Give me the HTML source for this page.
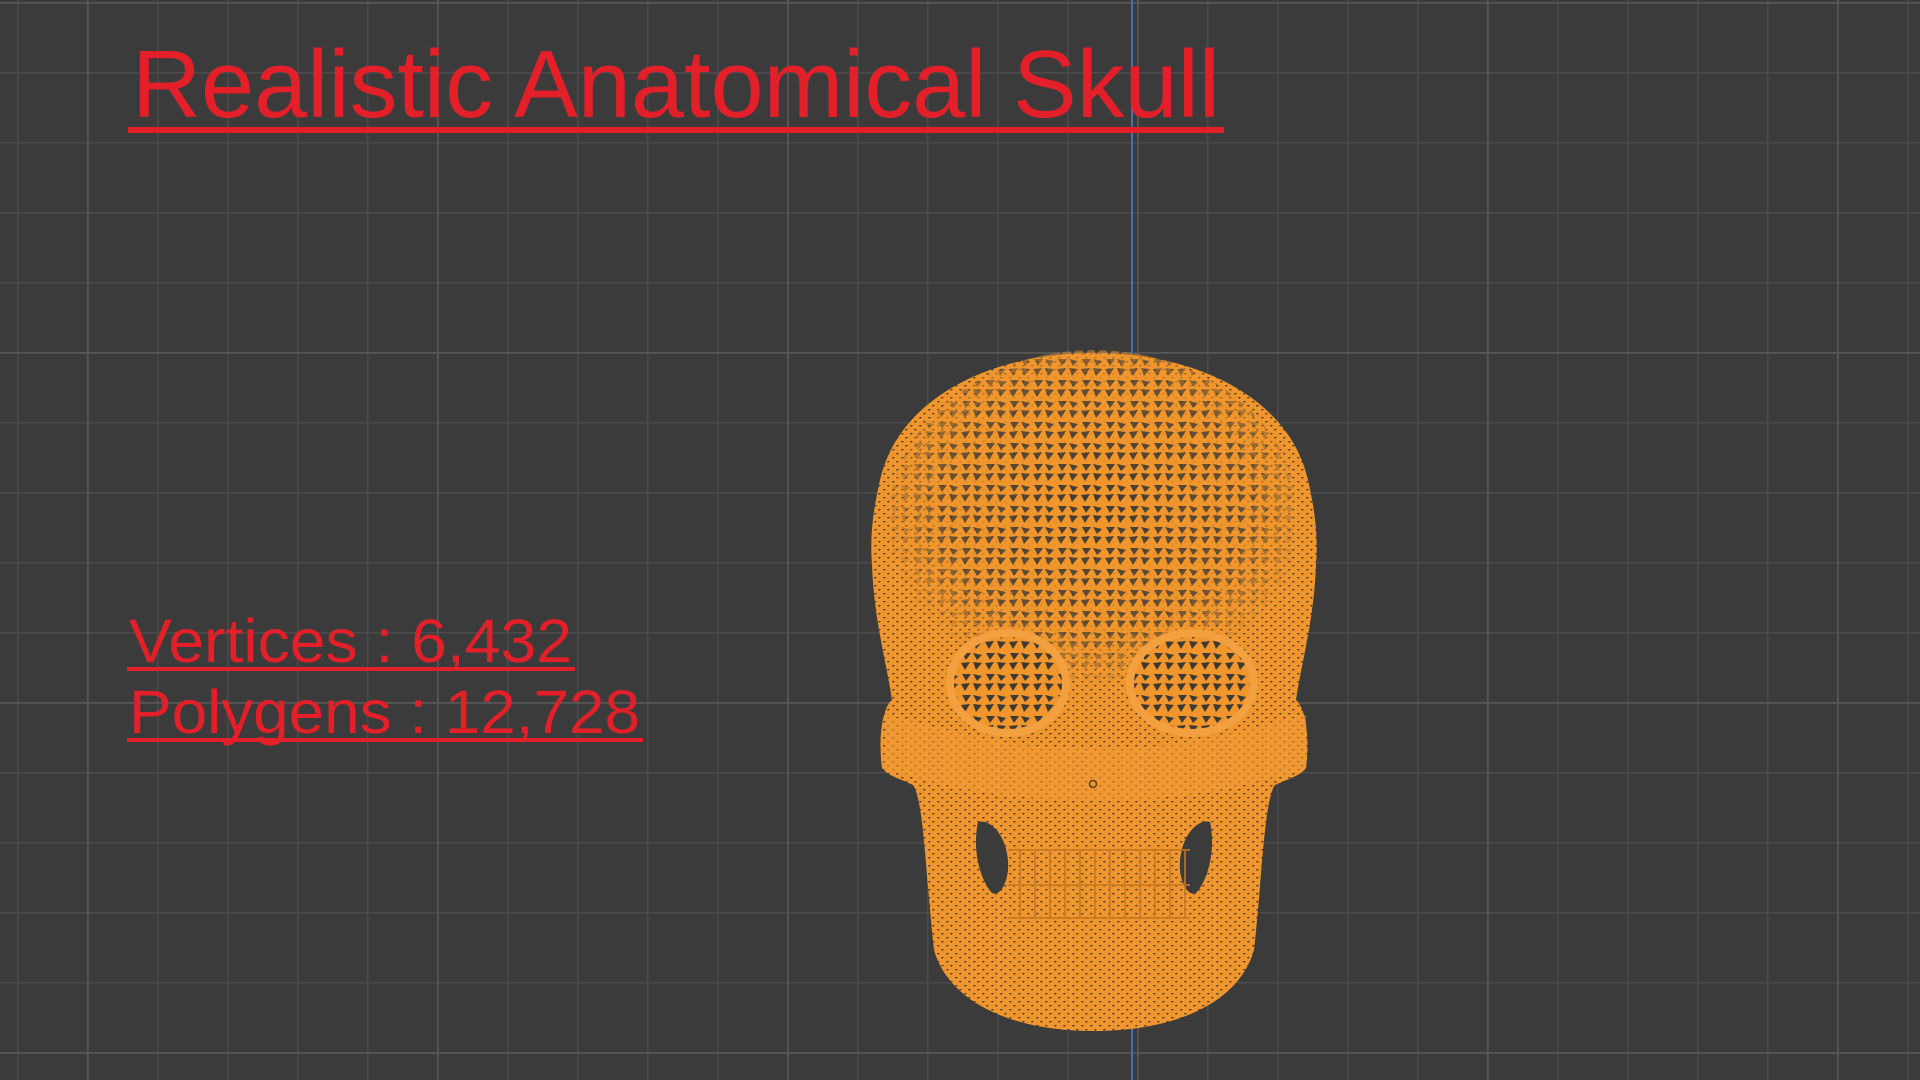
<!DOCTYPE html>
<html><head><meta charset="utf-8"><style>
html,body{margin:0;padding:0;width:1920px;height:1080px;overflow:hidden;background:#3b3b3b}
svg{display:block}
</style></head><body>
<svg width="1920" height="1080" viewBox="0 0 1920 1080" xmlns="http://www.w3.org/2000/svg">
<defs>
<pattern id="minor" x="17" y="2" width="70" height="70" patternUnits="userSpaceOnUse">
<path d="M0.5 0V70M0 0.5H70" stroke="#4b4b4b" stroke-width="2" fill="none"/>
</pattern>
<pattern id="major" x="87" y="2" width="350" height="350" patternUnits="userSpaceOnUse">
<path d="M0.5 0V350M0 0.5H350" stroke="#575757" stroke-width="2.5" fill="none"/>
</pattern>
<pattern id="mesh" width="24" height="21" patternUnits="userSpaceOnUse">
<rect width="24" height="21" fill="#f0962c"/>
<path d="M2 2L11 2L6 9Z M13 2L22 4L17 9Z M1 12L10 11L5 19Z M13 11L22 12L16 19Z" fill="#3d3a36"/>
</pattern>
<pattern id="meshfine" width="9" height="8" patternUnits="userSpaceOnUse">
<rect width="9" height="8" fill="#f0962c"/>
<path d="M1 1L4 1L2 3Z M5 5L8 5L6 7Z" fill="#4a4035"/>
</pattern>
<radialGradient id="fade" cx="0.5" cy="0.45" r="0.5">
<stop offset="0" stop-color="#fff" stop-opacity="1"/>
<stop offset="0.7" stop-color="#fff" stop-opacity="0.75"/>
<stop offset="1" stop-color="#fff" stop-opacity="0"/>
</radialGradient>
<mask id="m1"><ellipse cx="1094" cy="520" rx="215" ry="185" fill="url(#fade)"/></mask>
</defs>
<rect width="1920" height="1080" fill="#3b3b3b"/>
<rect width="1920" height="1080" fill="url(#minor)"/>
<rect width="1920" height="1080" fill="url(#major)"/>
<line x1="1132" y1="0" x2="1132" y2="1080" stroke="#4a6fb0" stroke-width="2"/>

<!-- skull -->
<path d="M1094 353 C1200 353 1290 400 1308 480 C1316 515 1318 540 1316 565 C1314 620 1302 660 1296 700 C1306 708 1310 740 1306 768 C1300 776 1290 778 1275 785 C1264 800 1262 880 1254 950 C1240 1000 1180 1031 1094 1031 C1008 1031 948 1000 934 950 C926 880 924 800 913 785 C898 778 888 776 882 768 C878 740 882 708 892 700 C886 660 874 620 872 565 C870 540 872 515 880 480 C898 400 988 353 1094 353 Z" fill="url(#meshfine)"/>
<ellipse cx="1094" cy="520" rx="205" ry="170" fill="url(#mesh)" mask="url(#m1)"/>
<!-- eye sockets -->
<ellipse cx="1008" cy="683" rx="58" ry="50" fill="url(#mesh)"/>
<ellipse cx="1192" cy="683" rx="62" ry="50" fill="url(#mesh)"/>
<ellipse cx="1008" cy="683" rx="58" ry="50" fill="none" stroke="#f2a040" stroke-width="8"/>
<ellipse cx="1192" cy="683" rx="62" ry="50" fill="none" stroke="#f2a040" stroke-width="8"/>
<!-- cheek band -->
<path d="M886 715 C950 730 1000 745 1060 748 L1130 748 C1190 745 1240 730 1306 715 L1304 770 C1240 785 1200 800 1094 800 C990 800 950 785 884 770Z" fill="#f29a36" opacity="0.55"/>
<!-- jaw holes -->
<path d="M978 822 C992 818 1010 840 1008 870 C1006 888 998 896 992 893 C980 880 972 850 978 822Z" fill="#3b3b3b"/>
<path d="M1210 822 C1196 818 1178 840 1180 870 C1182 888 1190 896 1196 893 C1208 880 1216 850 1210 822Z" fill="#3b3b3b"/>
<!-- teeth -->
<g stroke="#c57a25" stroke-width="2" opacity="0.8">
<path d="M1008 850H1190M1008 885H1190M1008 918H1190"/>
<path d="M1020 850V918M1035 850V918M1050 850V918M1065 850V918M1080 850V918M1095 850V918M1110 850V918M1125 850V918M1140 850V918M1155 850V918M1170 850V918M1185 850V918"/>
</g>
<circle cx="1093" cy="784" r="3.5" fill="none" stroke="#5a4020" stroke-width="1.5"/>

<!-- text -->
<g fill="#e3202a" font-family="'Liberation Sans', Arial, sans-serif">
<text x="132" y="117" font-size="96" textLength="1088" lengthAdjust="spacingAndGlyphs">Realistic Anatomical Skull</text>
<rect x="128" y="127" width="1096" height="6"/>
<text x="129" y="662" font-size="61" textLength="443" lengthAdjust="spacingAndGlyphs">Vertices : 6,432</text>
<rect x="127" y="667" width="448" height="4"/>
<text x="129" y="733" font-size="61" textLength="511" lengthAdjust="spacingAndGlyphs">Polygens : 12,728</text>
<rect x="127" y="738" width="516" height="4"/>
</g>
</svg>
</body></html>
